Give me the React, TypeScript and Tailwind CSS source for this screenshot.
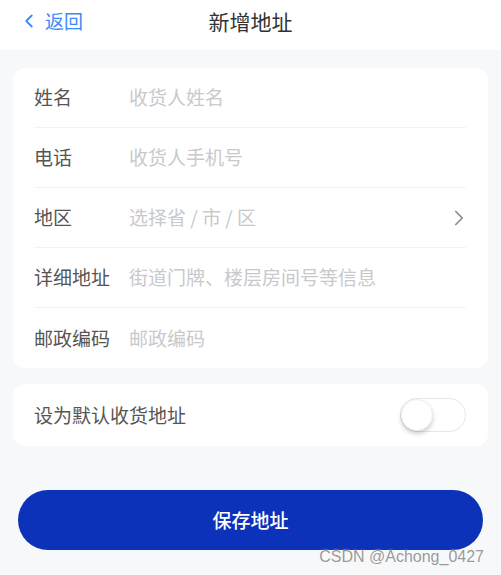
import { ChevronLeft, ChevronRight } from 'lucide-react';

const FIELDS = [
  { label: '姓名', placeholder: '收货人姓名' },
  { label: '电话', placeholder: '收货人手机号' },
  { label: '地区', placeholder: '选择省 / 市 / 区', arrow: true },
  { label: '详细地址', placeholder: '街道门牌、楼层房间号等信息' },
  { label: '邮政编码', placeholder: '邮政编码' },
];

export default function App() {
  return (
    <div
      className="relative w-[501px] h-[575px] bg-[#f7f8fa] overflow-hidden"
      style={{ fontFamily: '"Noto Sans CJK SC", "Noto Sans", sans-serif' }}
    >
      {/* Nav bar */}
      <div className="relative h-[50px] bg-white flex items-start justify-center pt-[6px]">
        <div className="absolute left-[18px] top-[6px] h-[30px] flex items-center text-[#3d8af7] text-[19px]">
          <ChevronLeft size={22} strokeWidth={2} />
          <span className="ml-[5px]">返回</span>
        </div>
        <span className="h-[30px] leading-[30px] text-[21px] text-[#323233]">新增地址</span>
      </div>

      {/* Form card */}
      <div className="mt-[18px] mx-[13px] bg-white rounded-[12px]">
        {FIELDS.map((f, i) => (
          <div key={f.label} className="h-[60px] pl-[21px] pr-[22px]">
            <div className={`h-full flex items-center ${i < FIELDS.length - 1 ? 'border-b border-[#f2f3f5]' : ''}`}>
              <span className="w-[95px] text-[19px] text-[#555555]">{f.label}</span>
              <span className="flex-1 text-[19px] text-[#c8c9cc]">{f.placeholder}</span>
              {f.arrow && <ChevronRight size={26} strokeWidth={1.6} className="text-[#8a8b8e] -mr-[6px]" />}
            </div>
          </div>
        ))}
      </div>

      {/* Default switch card */}
      <div className="mt-4 mx-[13px] h-[62px] bg-white rounded-[12px] pl-[21px] pr-[22px] flex items-center justify-between">
        <span className="text-[19px] text-[#555555]">设为默认收货地址</span>
        <div className="w-[66px] h-[34px] rounded-full border border-[#e5e6e8] bg-white relative">
          <div className="absolute left-0 top-0 w-[32px] h-[32px] rounded-full bg-white shadow-[0_3px_4px_rgba(0,0,0,0.18)] border border-[#eeeeee]" />
        </div>
      </div>

      {/* Save button */}
      <div className="mt-[44px] mx-[18px] h-[60px] rounded-full bg-[#0b32b9] flex items-center justify-center">
        <span className="text-white text-[19px] font-medium">保存地址</span>
      </div>

      {/* Watermark */}
      <span
        className="absolute right-[17px] top-[545px] text-[16px] text-[#9a9a9a]"
        style={{ fontFamily: '"Liberation Sans", Arial, sans-serif', textShadow: '0 0 2px #fff' }}
      >
        CSDN @Achong_0427
      </span>
    </div>
  );
}
